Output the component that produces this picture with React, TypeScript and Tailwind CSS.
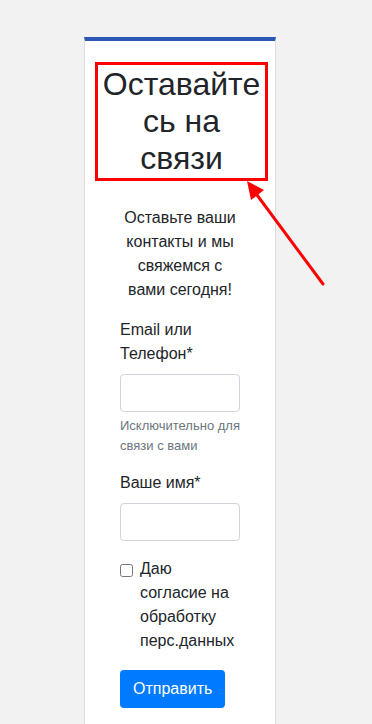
export default function App() {
  return (
    <div
      className="relative h-[724px] overflow-hidden bg-[#f2f2f2] pt-[37px]"
      style={{ fontFamily: '"Liberation Sans", Arial, sans-serif' }}
    >
      <div className="ml-[84px] h-[720px] w-[192px] border-x border-[#dcdcdc] border-t-4 border-t-[#2c57b3] bg-white pt-[21px]">
        {/* title with the red annotation box */}
        <h2 className="ml-[10px] w-[173px] border-[3px] border-[#ff0000] py-[1px] text-center text-[32px] leading-[37px] text-[#212529] break-words">
          Оставайтесь на связи
        </h2>

        <div className="px-[35px] pt-[25px] text-[16px] leading-6 text-[#212529]">
          <p className="mb-4 text-center">Оставьте ваши контакты и мы свяжемся с вами сегодня!</p>

          <div className="mb-4">
            <label className="mb-2 block">Email или Телефон*</label>
            <input
              type="text"
              className="block h-[38px] w-full rounded border border-[#ced4da] bg-white px-3"
            />
            <small className="mt-1 block text-[13px] leading-[19.5px] text-[#6c757d]">
              Исключительно для связи с вами
            </small>
          </div>

          <div className="mb-4">
            <label className="mb-2 block">Ваше имя*</label>
            <input
              type="text"
              className="block h-[38px] w-full rounded border border-[#ced4da] bg-white px-3"
            />
          </div>

          <div className="relative mb-[17px] pl-5">
            <input type="checkbox" className="absolute left-0 top-[7px] m-0 h-[13px] w-[13px]" />
            <label>Даю согласие на обработку перс.данных</label>
          </div>

          <button className="h-[38px] rounded bg-[#007bff] px-[13px] text-white">Отправить</button>
        </div>
      </div>

      {/* red annotation arrow */}
      <svg className="absolute left-0 top-0" width="372" height="724">
        <line x1="323" y1="284" x2="254" y2="191" stroke="#ff0000" strokeWidth="3" strokeLinecap="round" />
        <polygon points="247,181 251,200 264,190" fill="#ff0000" />
      </svg>
    </div>
  );
}
